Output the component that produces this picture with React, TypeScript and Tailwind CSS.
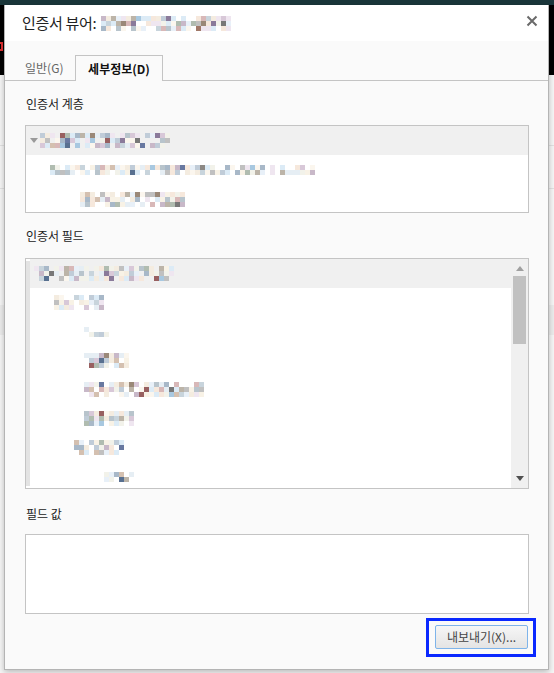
import React from 'react';

const FONT = '"Noto Sans CJK KR", "Noto Sans", "Liberation Sans", sans-serif';

// pixelated redaction blocks for certificate names
const LIGHT = ['#f4ece0', '#e8f0f8', '#f8f2e6', '#e6eef4', '#efe6f0', '#f2f2ea', '#dcebf6', '#f6e8dc', '#fbf6ee'];
const MID = ['#c8b8c8', '#b8c4cc', '#d4c0b0', '#c0ccd8', '#d8c8d8', '#bcb4a8', '#a8b8c8', '#c8d4dc', '#d8b8b8', '#b0bcb0', '#a8c8e0', '#c0c0c0'];
const DARK = ['#8c8884', '#a07868', '#6878a0', '#787878', '#986060', '#587090', '#8a7a9a', '#9a8878'];

function rng(seed: number) {
  let a = seed >>> 0;
  return () => {
    a = (a + 0x6d2b79f5) >>> 0;
    let t = a;
    t = Math.imul(t ^ (t >>> 15), t | 1);
    t ^= t + Math.imul(t ^ (t >>> 7), t | 61);
    return ((t ^ (t >>> 14)) >>> 0) / 4294967296;
  };
}

function Mosaic({ seed, cols, rows }: { seed: number; cols: number; rows: number }) {
  const r = rng(seed);
  const cells: string[] = [];
  for (let i = 0; i < cols * rows; i++) {
    const p = r();
    const pick = (list: string[]) => list[Math.floor(r() * list.length)];
    if (p < 0.16) cells.push('transparent');
    else if (p < 0.6) cells.push(pick(LIGHT));
    else if (p < 0.93) cells.push(pick(MID));
    else cells.push(pick(DARK));
  }
  return (
    <div className="grid" style={{ gridTemplateColumns: `repeat(${cols}, 5px)` }}>
      {cells.map((c, i) => (
        <div key={i} className="h-[5px] w-[5px]" style={{ background: c }} />
      ))}
    </div>
  );
}

function SectionLabel({ children, className = '' }: { children: React.ReactNode; className?: string }) {
  return <div className={`flex items-center text-[12px] text-[#222] ${className}`}>{children}</div>;
}

const fieldRows = [
  { pad: 4, cols: 28, rows: 3, seed: 11 },
  { pad: 24, cols: 10, rows: 3, seed: 12 },
  { pad: 54, cols: 5, rows: 2, seed: 13 },
  { pad: 54, cols: 9, rows: 3, seed: 14 },
  { pad: 54, cols: 24, rows: 3, seed: 15 },
  { pad: 54, cols: 10, rows: 3, seed: 16 },
  { pad: 44, cols: 10, rows: 3, seed: 17 },
  { pad: 74, cols: 6, rows: 2, seed: 18 },
];

export default function App() {
  return (
    <div className="relative h-[673px] w-[554px] overflow-hidden bg-[#f6f6f6]" style={{ fontFamily: FONT }}>
      {/* page behind the dialog */}
      <div className="flex h-full flex-col">
        <div className="h-[5px] bg-[#1a363a]" />
        <div className="flex h-[70px] flex-col bg-black pt-[37px]">
          <div className="h-[9px] w-[3px] border-y-2 border-r-2 border-[#e03030]" />
        </div>
        <div className="h-[70px]" />
        <div className="h-px bg-[#e2e2e2]" />
        <div className="h-[42px]" />
        <div className="h-px bg-[#e2e2e2]" />
        <div className="h-[116px]" />
        <div className="h-[30px] bg-[#ececec]" />
      </div>

      {/* certificate viewer dialog */}
      <div className="absolute left-[4px] top-[5px] flex h-[665px] w-[545px] flex-col border-x border-b border-[#b4b4b4] bg-[#fafafa] shadow-[0_2px_6px_rgba(0,0,0,0.25)]">
        <div className="flex h-[36px] items-center justify-between bg-white pl-[17px] pr-[10px]">
          <div className="flex items-center gap-[5px]">
            <span className="text-[15px] tracking-[-0.3px] text-[#222]">인증서 뷰어:</span>
            <Mosaic seed={3} cols={26} rows={3} />
          </div>
          <svg width="12" height="12" viewBox="0 0 12 12" className="mb-[5px]">
            <path d="M1.5 1.5 L10.5 10.5 M10.5 1.5 L1.5 10.5" stroke="#6a6a6a" strokeWidth="2" />
          </svg>
        </div>

        <div className="flex h-[40px] items-end border-b border-[#c4c4c4] pl-[14px]">
          <div className="flex h-[25px] w-[56px] items-center pl-[6px] text-[12px] text-[#666]">일반(G)</div>
          <div className="mb-[-1px] flex h-[26px] w-[88px] items-center justify-center border border-b-0 border-[#c4c4c4] bg-[#fafafa] text-[12px] font-bold text-[#111]">
            세부정보(D)
          </div>
        </div>

        <div className="flex flex-1 flex-col pl-[20px] pr-[19px]">
          <SectionLabel className="h-[44px] pl-[1px] pt-[1px]">인증서 계층</SectionLabel>
          <div className="flex h-[88px] flex-col overflow-hidden border border-[#c4c4c4] bg-white">
            <div className="flex h-[29px] shrink-0 items-center bg-[#f0f0f0] pl-[4px]">
              <svg width="8" height="5" viewBox="0 0 8 5" className="mr-[2px]">
                <path d="M0 0 H8 L4 5 Z" fill="#9a9a9a" />
              </svg>
              <Mosaic seed={4} cols={26} rows={3} />
            </div>
            <div className="flex h-[30px] shrink-0 items-center pl-[24px]">
              <Mosaic seed={5} cols={53} rows={2} />
            </div>
            <div className="flex h-[28px] shrink-0 items-center pl-[54px]">
              <Mosaic seed={6} cols={21} rows={3} />
            </div>
          </div>

          <SectionLabel className="h-[45px] pl-[1px] pt-[1px]">인증서 필드</SectionLabel>
          <div className="flex h-[231px] border border-[#c4c4c4] bg-white">
            <div className="my-[2px] w-[4px] shrink-0 bg-[#e3e3e3]" />
            <div className="flex flex-1 flex-col overflow-hidden">
              {fieldRows.map((row, i) => (
                <div
                  key={i}
                  className={`flex h-[29px] shrink-0 items-center ${i === 0 ? 'bg-[#f0f0f0]' : ''}`}
                  style={{ paddingLeft: row.pad }}
                >
                  <Mosaic seed={row.seed} cols={row.cols} rows={row.rows} />
                </div>
              ))}
            </div>
            <div className="flex w-[17px] shrink-0 flex-col items-center bg-[#f0f0f0]">
              <div className="flex h-[17px] items-center justify-center pt-[2px]">
                <svg width="8" height="5" viewBox="0 0 8 5">
                  <path d="M4 0 L8 5 H0 Z" fill="#a0a0a0" />
                </svg>
              </div>
              <div className="h-[68px] w-[13px] bg-[#c1c1c1]" />
              <div className="flex-1" />
              <div className="flex h-[17px] items-center justify-center pb-[2px]">
                <svg width="8" height="5" viewBox="0 0 8 5">
                  <path d="M0 0 H8 L4 5 Z" fill="#505050" />
                </svg>
              </div>
            </div>
          </div>

          <SectionLabel className="h-[45px] pl-[1px] pt-[4px]">필드 값</SectionLabel>
          <div className="h-[80px] border border-[#c4c4c4] bg-white" />

          <div className="flex justify-end pr-[1px] pt-[11px]">
            <div className="relative">
              <button className="flex h-[24px] w-[93px] items-center justify-center rounded-[2px] border border-[#7eb4ea] bg-gradient-to-b from-[#f6f6f6] to-[#e4e4e4] text-[12px] text-[#444]">
                내보내기(X)...
              </button>
              <div className="pointer-events-none absolute left-[-9px] right-[-8px] top-[-7px] bottom-[-8px] border-[3px] border-[#0a28ff]" />
            </div>
          </div>
        </div>
      </div>
    </div>
  );
}
